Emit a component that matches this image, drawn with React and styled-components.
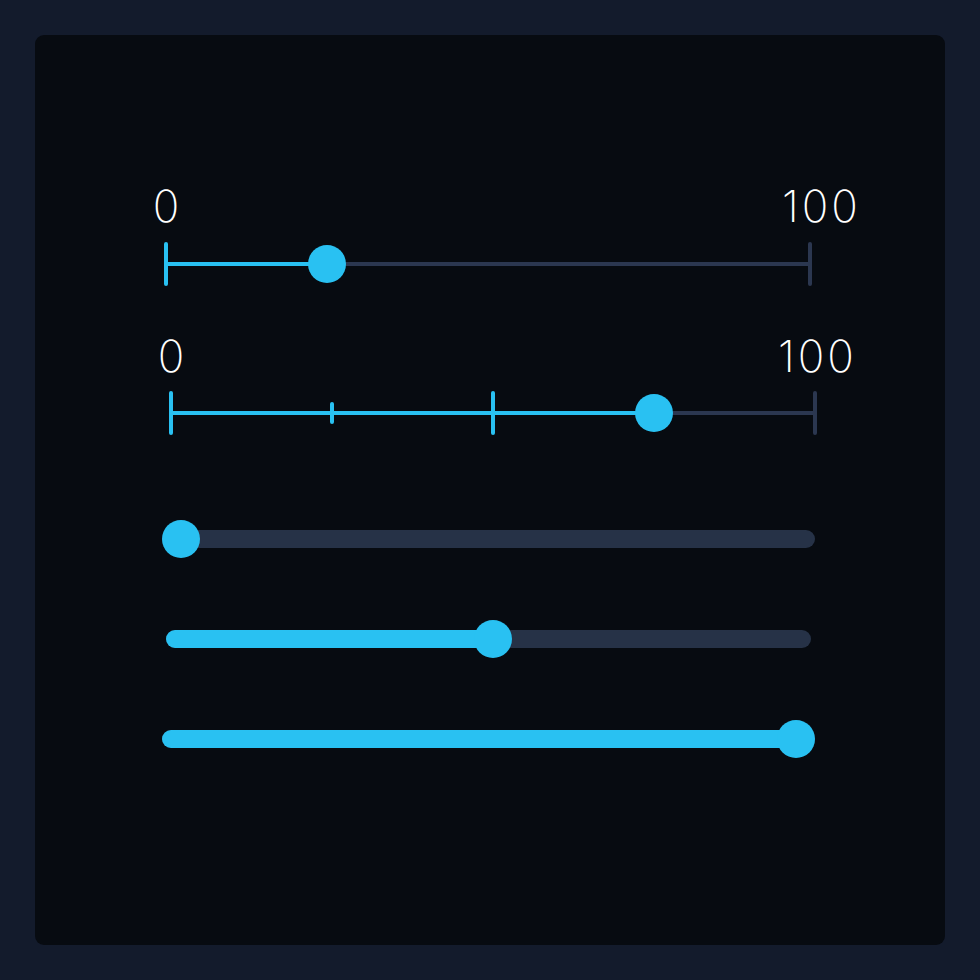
import React from "react";
import styled, { createGlobalStyle } from "styled-components";

const CYAN = "#29c1f2";
const GREY = "#263247";
const TICK_GREY = "#2b3750";

const Global = createGlobalStyle`
  html, body { margin: 0; padding: 0; background: #131b2c; }
  body { font-family: Inter, "Liberation Sans", sans-serif; }
`;

const Page = styled.div`
  width: 980px;
  height: 980px;
  box-sizing: border-box;
  padding: 35px;
  background: #131b2c;
`;

const Panel = styled.div`
  width: 910px;
  height: 910px;
  box-sizing: border-box;
  border-radius: 9px;
  background: #070b11;
  padding-top: 149px;
  display: flex;
  flex-direction: column;
`;

const LabeledSlider = styled.div`
  width: 644px;
  margin-left: ${(p) => p.$left}px;
  margin-top: ${(p) => p.$top || 0}px;
  display: flex;
  flex-direction: column;
  gap: ${(p) => p.$gap}px;
`;

const LabelRow = styled.div`
  display: flex;
  justify-content: space-between;
  margin: 0 -40px;
`;

const Label = styled.span`
  width: 80px;
  text-align: center;
  font-size: 44px;
  line-height: 44px;
  font-weight: 200;
  letter-spacing: 3px;
  text-indent: 3px;
  color: #ffffff;
  margin-right: ${(p) => (p.$nudge ? -p.$nudge : 0)}px;
`;

const Rail = styled.div`
  position: relative;
  height: 46px;
`;

const Line = styled.div`
  position: absolute;
  left: 0;
  right: 0;
  top: 21px;
  height: 4px;
  background: ${TICK_GREY};
`;

const LineFill = styled.div`
  position: absolute;
  left: 0;
  top: 21px;
  height: 4px;
  background: ${CYAN};
`;

const Tick = styled.div`
  position: absolute;
  width: 4px;
  margin-left: -2px;
  border-radius: 2px;
  top: ${(p) => (p.$small ? 12 : 1)}px;
  height: ${(p) => (p.$small ? 22 : 44)}px;
  background: ${(p) => (p.$active ? CYAN : TICK_GREY)};
`;

const Thumb = styled.div`
  position: absolute;
  width: 38px;
  height: 38px;
  margin-left: -19px;
  top: 50%;
  margin-top: -19px;
  border-radius: 50%;
  background: ${CYAN};
`;

const BarSlider = styled.div`
  position: relative;
  height: 40px;
  width: ${(p) => p.$width}px;
  margin-left: ${(p) => p.$left}px;
  margin-top: ${(p) => p.$top}px;
`;

const Bar = styled.div`
  position: absolute;
  left: 0;
  right: 0;
  top: 11px;
  height: 18px;
  border-radius: 9px;
  background: ${GREY};
`;

const BarFill = styled.div`
  position: absolute;
  left: 0;
  top: 11px;
  height: 18px;
  border-radius: 9px;
  background: ${CYAN};
`;

function TickSlider({ left, top, gap, value, ticks, nudge }) {
  const W = 644;
  const x = value * W;
  return (
    <LabeledSlider $left={left} $top={top} $gap={gap}>
      <LabelRow>
        <Label>0</Label>
        <Label $nudge={nudge}>100</Label>
      </LabelRow>
      <Rail>
        <Line />
        <LineFill style={{ width: x }} />
        {ticks.map((t, i) => (
          <Tick
            key={i}
            $small={t.small}
            $active={t.pos * W <= x}
            style={{ left: t.pos * W }}
          />
        ))}
        <Thumb style={{ left: x }} />
      </Rail>
    </LabeledSlider>
  );
}

function ThickSlider({ left, top, width, value }) {
  const r = 19;
  const cx = r + value * (width - 2 * r);
  return (
    <BarSlider $left={left} $top={top} $width={width}>
      <Bar />
      {value > 0 && <BarFill style={{ width: cx }} />}
      <Thumb style={{ left: cx }} />
    </BarSlider>
  );
}

export default function App() {
  return (
    <>
      <Global />
      <Page>
        <Panel>
          <TickSlider
            left={131}
            gap={13}
            value={0.25}
            nudge={9}
            ticks={[{ pos: 0 }, { pos: 1 }]}
          />
          <TickSlider
            left={136}
            top={47}
            gap={12}
            value={0.75}
            ticks={[
              { pos: 0 },
              { pos: 0.25, small: true },
              { pos: 0.5 },
              { pos: 1 },
            ]}
          />
          <ThickSlider left={127} top={83} width={653} value={0} />
          <ThickSlider left={131} top={60} width={645} value={0.5075} />
          <ThickSlider left={127} top={60} width={653} value={1} />
        </Panel>
      </Page>
    </>
  );
}
